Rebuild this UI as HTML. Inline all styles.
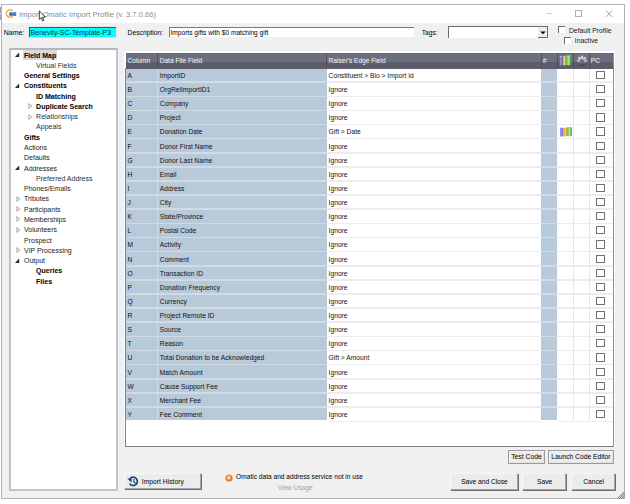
<!DOCTYPE html>
<html><head><meta charset="utf-8"><style>
*{margin:0;padding:0;box-sizing:border-box}
svg{display:block}
html,body{width:630px;height:504px;overflow:hidden;background:#fff;font-family:"Liberation Sans",sans-serif;}
.a{position:absolute;white-space:nowrap}
#win{position:absolute;left:1px;top:4px;width:624px;height:495px;border:1px solid #b4b4b4;background:#f0f0f0;overflow:hidden}
#title{position:absolute;left:0;top:0;width:622px;height:18px;background:#fff}
.t7{font-size:7px}
.g{font-size:6.7px;line-height:8px;color:#111}
.hd{font-size:6.6px;line-height:8px;color:#f6f6fa}
.btn{position:absolute;background:#ececec;border:1px solid #a6a6a6;border-top-color:#f8f8f8;border-left-color:#f8f8f8;box-shadow:1px 1px 0 #6e6e6e}
.btnt{position:absolute;left:0;right:0;text-align:center;font-size:6.6px;color:#000;-webkit-text-stroke:0.12px #000}
</style></head><body>

<div id="win">
<div id="title"></div>
</div>
<div class="a" style="left:0;top:7px;width:1px;height:12.5px;background:linear-gradient(#9aa4b4 0,#9aa4b4 45%,#e8ecf0 50%,#9aa4b4 56%,#9aa4b4 100%)"></div>
<svg class="a" style="left:4px;top:8px" width="14" height="11" viewBox="0 0 14 11">
<defs><linearGradient id="tb" x1="0" y1="0" x2="0" y2="1"><stop offset="0" stop-color="#7ab0e8"/><stop offset="1" stop-color="#1f5a9e"/></linearGradient></defs>
<path d="M8.6 2.6 A3.8 3.8 0 1 0 8.8 8.2" fill="none" stroke="#f5a040" stroke-width="1.4"/>
<path d="M5.2 4.4 Q7 3.2 8.6 4.2 Q10.4 3.2 12.2 4 Q12.6 5.6 12.2 7.4 Q10.4 8.2 8.6 7.4 Q7 8.2 5.2 7.4 Q4.8 5.8 5.2 4.4 Z" fill="url(#tb)"/>
</svg>
<div class="a" style="left:19px;top:9.8px;font-size:7.6px;color:#8c8c8c;line-height:10px">Import Omatic Import Profile (v. 3.7.0.66)</div>
<div class="a" style="left:546px;top:13.2px;width:6px;height:0.8px;background:#d4d4d4"></div>
<div class="a" style="left:575px;top:10.2px;width:6.8px;height:6.8px;border:1px solid #b0b0b0"></div>
<svg class="a" style="left:605px;top:10px" width="9" height="9" viewBox="0 0 9 9"><path d="M1 0.7 L7.2 6.9 M7.2 0.7 L1 6.9" stroke="#8c8c8c" stroke-width="0.8"/></svg>
<svg class="a" style="left:38px;top:10px" width="10" height="13" viewBox="0 0 10 13"><path d="M1.3 0.8 L1.3 9.5 L3.2 7.6 L4.6 10.9 L5.9 10.3 L4.6 7.2 L7.3 7.2 Z" fill="#fff" stroke="#111" stroke-width="0.8" stroke-linejoin="round"/></svg>
<div class="a t7" style="left:3.8px;top:29.2px;color:#000;line-height:8px">Name:</div>
<div class="a" style="left:29px;top:26.5px;width:87px;height:10.5px;background:#00ffff;border-top:1px solid #3c5a5a;border-left:1px solid #3c5a5a;box-shadow:0 0 0 0.6px #f0d8d8"></div>
<div class="a t7" style="left:30.6px;top:28.5px;color:#003838;line-height:8px">Benevity-SC-Template-P3</div>
<div class="a t7" style="left:127.6px;top:29px;color:#000;line-height:8px;font-size:6.74px">Description:</div>
<div class="a" style="left:169px;top:27px;width:245px;height:10px;background:#fff;border-top:1px solid #7a7a7a;border-left:1px solid #7a7a7a"></div>
<div class="a t7" style="left:170.5px;top:28.6px;color:#000;line-height:8px;font-size:6.6px">Imports gifts with $0 matching gift</div>
<div class="a t7" style="left:421.7px;top:29px;color:#000;line-height:8px;font-size:6.65px">Tags:</div>
<div class="a" style="left:448px;top:26.3px;width:100px;height:11.3px;background:#fff;border-top:1px solid #6e6e6e;border-left:1px solid #6e6e6e;border-right:1px solid #6a6a6a"></div>
<div class="a" style="left:537.5px;top:27.3px;width:9.6px;height:10.3px;background:#ececec;border-bottom:1px solid #6a6a6a"></div>
<svg class="a" style="left:539.5px;top:30.6px" width="6" height="4" viewBox="0 0 6 4"><path d="M0.3 0.5 L5.7 0.5 L3 3.3 Z" fill="#000"/></svg>
<div class="a" style="left:557.6px;top:26.2px;width:7.4px;height:7px;background:#fff;border-top:1px solid #6a6a6a;border-left:1px solid #6a6a6a"></div>
<div class="a" style="left:569px;top:26.6px;color:#1a1a1a;line-height:8px;font-size:6.75px">Default Profile</div>
<div class="a" style="left:564px;top:37.1px;width:7.2px;height:7px;background:#fff;border-top:1px solid #6a6a6a;border-left:1px solid #6a6a6a"></div>
<div class="a" style="left:574.8px;top:37.3px;color:#1a1a1a;line-height:8px;font-size:6.75px">Inactive</div>
<div class="a" style="left:8.8px;top:48px;width:109.2px;height:443.4px;background:#fff;border:2px solid #c2c6cc;border-left-color:#bfc3c9;border-top-color:#b4b8be"></div>
<div class="a" style="left:23px;top:50px;width:34px;height:9.6px;background:#d9d9d9"></div>
<div class="a t7" style="left:24px;top:50.50px;line-height:10px;font-weight:700;color:#000">Field Map</div>
<svg class="a" style="left:13.9px;top:52.30px" width="6" height="6" viewBox="0 0 6 6"><path d="M5.2 0.6 L5.2 4.9 L0.9 4.9 Z" fill="#2a2a2a"/></svg>
<div class="a t7" style="left:36.1px;top:60.78px;line-height:10px;font-weight:400;color:#28303a">Virtual Fields</div>
<div class="a t7" style="left:24px;top:71.06px;line-height:10px;font-weight:700;color:#000">General Settings</div>
<div class="a t7" style="left:24px;top:81.34px;line-height:10px;font-weight:700;color:#000">Constituents</div>
<svg class="a" style="left:13.9px;top:83.14px" width="6" height="6" viewBox="0 0 6 6"><path d="M5.2 0.6 L5.2 4.9 L0.9 4.9 Z" fill="#2a2a2a"/></svg>
<div class="a t7" style="left:36.1px;top:91.62px;line-height:10px;font-weight:700;color:#000">ID Matching</div>
<div class="a t7" style="left:36.1px;top:101.90px;line-height:10px;font-weight:700;color:#000">Duplicate Search</div>
<svg class="a" style="left:27.6px;top:103.40px" width="5" height="6" viewBox="0 0 5 6"><path d="M0.8 0.7 L3.9 3 L0.8 5.3 Z" fill="#fff" stroke="#909090" stroke-width="0.75"/></svg>
<div class="a t7" style="left:36.1px;top:112.18px;line-height:10px;font-weight:400;color:#28303a">Relationships</div>
<svg class="a" style="left:27.6px;top:113.68px" width="5" height="6" viewBox="0 0 5 6"><path d="M0.8 0.7 L3.9 3 L0.8 5.3 Z" fill="#fff" stroke="#909090" stroke-width="0.75"/></svg>
<div class="a t7" style="left:36.1px;top:122.46px;line-height:10px;font-weight:400;color:#28303a">Appeals</div>
<div class="a t7" style="left:24px;top:132.74px;line-height:10px;font-weight:700;color:#000">Gifts</div>
<div class="a t7" style="left:24px;top:143.02px;line-height:10px;font-weight:400;color:#1a1a1a">Actions</div>
<div class="a t7" style="left:24px;top:153.30px;line-height:10px;font-weight:400;color:#1a1a1a">Defaults</div>
<div class="a t7" style="left:24px;top:163.58px;line-height:10px;font-weight:400;color:#1a1a1a">Addresses</div>
<svg class="a" style="left:13.9px;top:165.38px" width="6" height="6" viewBox="0 0 6 6"><path d="M5.2 0.6 L5.2 4.9 L0.9 4.9 Z" fill="#2a2a2a"/></svg>
<div class="a t7" style="left:36.1px;top:173.86px;line-height:10px;font-weight:400;color:#28303a">Preferred Address</div>
<div class="a t7" style="left:24px;top:184.14px;line-height:10px;font-weight:400;color:#1a1a1a">Phones/Emails</div>
<div class="a t7" style="left:24px;top:194.42px;line-height:10px;font-weight:400;color:#1a1a1a">Tributes</div>
<svg class="a" style="left:15.5px;top:195.92px" width="5" height="6" viewBox="0 0 5 6"><path d="M0.8 0.7 L3.9 3 L0.8 5.3 Z" fill="#fff" stroke="#909090" stroke-width="0.75"/></svg>
<div class="a t7" style="left:24px;top:204.70px;line-height:10px;font-weight:400;color:#1a1a1a">Participants</div>
<svg class="a" style="left:15.5px;top:206.20px" width="5" height="6" viewBox="0 0 5 6"><path d="M0.8 0.7 L3.9 3 L0.8 5.3 Z" fill="#fff" stroke="#909090" stroke-width="0.75"/></svg>
<div class="a t7" style="left:24px;top:214.98px;line-height:10px;font-weight:400;color:#1a1a1a">Memberships</div>
<svg class="a" style="left:15.5px;top:216.48px" width="5" height="6" viewBox="0 0 5 6"><path d="M0.8 0.7 L3.9 3 L0.8 5.3 Z" fill="#fff" stroke="#909090" stroke-width="0.75"/></svg>
<div class="a t7" style="left:24px;top:225.26px;line-height:10px;font-weight:400;color:#1a1a1a">Volunteers</div>
<svg class="a" style="left:15.5px;top:226.76px" width="5" height="6" viewBox="0 0 5 6"><path d="M0.8 0.7 L3.9 3 L0.8 5.3 Z" fill="#fff" stroke="#909090" stroke-width="0.75"/></svg>
<div class="a t7" style="left:24px;top:235.54px;line-height:10px;font-weight:400;color:#1a1a1a">Prospect</div>
<div class="a t7" style="left:24px;top:245.82px;line-height:10px;font-weight:400;color:#1a1a1a">VIP Processing</div>
<svg class="a" style="left:15.5px;top:247.32px" width="5" height="6" viewBox="0 0 5 6"><path d="M0.8 0.7 L3.9 3 L0.8 5.3 Z" fill="#fff" stroke="#909090" stroke-width="0.75"/></svg>
<div class="a t7" style="left:24px;top:256.10px;line-height:10px;font-weight:400;color:#1a1a1a">Output</div>
<svg class="a" style="left:13.9px;top:257.90px" width="6" height="6" viewBox="0 0 6 6"><path d="M5.2 0.6 L5.2 4.9 L0.9 4.9 Z" fill="#2a2a2a"/></svg>
<div class="a t7" style="left:36.1px;top:266.38px;line-height:10px;font-weight:700;color:#000">Queries</div>
<div class="a t7" style="left:36.1px;top:276.66px;line-height:10px;font-weight:700;color:#000">Files</div>
<div class="a" style="left:124px;top:51px;width:490.5px;height:396px;background:#fff"></div>
<div class="a" style="left:125.2px;top:68px;width:1.2px;height:378.6px;background:#7c7c8a"></div>
<div class="a" style="left:125.2px;top:445.6px;width:488.4px;height:1.2px;background:#7c7c8a"></div>
<div class="a" style="left:612.6px;top:52.5px;width:1px;height:394.3px;background:#8e8e9a"></div>
<div class="a" style="left:125.5px;top:52.5px;width:487px;height:16px;background:linear-gradient(#5f5f6e 0,#6c6f7e 1px,#6c6f7e 8.5px,#5c5c6c 9px,#5c5c6c 15px,#646473 16px)"></div>
<div class="a" style="left:157.1px;top:52.5px;width:1px;height:16px;background:#50505e"></div>
<div class="a" style="left:326.4px;top:52.5px;width:1px;height:16px;background:#50505e"></div>
<div class="a" style="left:540.5px;top:52.5px;width:1px;height:16px;background:#50505e"></div>
<div class="a" style="left:556.5px;top:52.5px;width:1px;height:16px;background:#50505e"></div>
<div class="a" style="left:572.5px;top:52.5px;width:1px;height:16px;background:#50505e"></div>
<div class="a" style="left:588.8px;top:52.5px;width:1px;height:16px;background:#50505e"></div>
<div class="a hd" style="left:127.5px;top:57.2px">Column</div>
<div class="a hd" style="left:159.7px;top:57.2px">Data File Field</div>
<div class="a hd" style="left:328.6px;top:57.2px">Raiser's Edge Field</div>
<div class="a hd" style="left:542.7px;top:57.2px">#</div>
<div class="a hd" style="left:590.8px;top:57.2px">PC</div>
<div class="a" style="left:559px;top:55px"><svg width="14" height="12" viewBox="0 0 14 12"><defs>
<linearGradient id="bb" x1="0" x2="1"><stop offset="0" stop-color="#5a5ad8"/><stop offset=".5" stop-color="#9a9af8"/><stop offset="1" stop-color="#5858d0"/></linearGradient>
<linearGradient id="by" x1="0" x2="1"><stop offset="0" stop-color="#c89a28"/><stop offset=".5" stop-color="#f4d860"/><stop offset="1" stop-color="#c09020"/></linearGradient>
<linearGradient id="bg" x1="0" x2="1"><stop offset="0" stop-color="#60b048"/><stop offset=".5" stop-color="#a8e890"/><stop offset="1" stop-color="#48a030"/></linearGradient></defs>
<rect x="0.3" y="1.6" width="3.1" height="8.9" rx=".6" fill="url(#bb)"/>
<rect x="3.7" y="1.6" width="3.3" height="8.6" rx=".6" fill="url(#by)"/>
<rect x="7.1" y="1.0" width="4.8" height="9.2" rx=".6" fill="url(#bg)"/>
<path d="M0.8 1.4 L3 1.4 M4.2 1.3 L6.5 1.3 M7.6 0.8 L11.4 0.8" stroke="#fff" stroke-opacity=".55" stroke-width="1"/>
</svg></div>
<div class="a" style="left:575.6px;top:54.8px"><svg width="12" height="12" viewBox="-6 -6 12 12"><defs><linearGradient id="gg" x1="0" y1="0" x2="0" y2="1"><stop offset="0" stop-color="#dcdcdc"/><stop offset=".5" stop-color="#b8b8b8"/><stop offset=".7" stop-color="#6a6a6a"/><stop offset="1" stop-color="#2a2a2a"/></linearGradient></defs>
<path fill="url(#gg)" d="M-1.30 -3.46 L-1.05 -5.19 L1.05 -5.19 L1.30 -3.46 L1.53 -3.37 L2.93 -4.42 L4.42 -2.93 L3.37 -1.53 L3.46 -1.30 L5.19 -1.05 L5.19 1.05 L3.46 1.30 L3.37 1.53 L4.42 2.93 L2.93 4.42 L1.53 3.37 L1.30 3.46 L1.05 5.19 L-1.05 5.19 L-1.30 3.46 L-1.53 3.37 L-2.93 4.42 L-4.42 2.93 L-3.37 1.53 L-3.46 1.30 L-5.19 1.05 L-5.19 -1.05 L-3.46 -1.30 L-3.37 -1.53 L-4.42 -2.93 L-2.93 -4.42 L-1.53 -3.37 Z"/>
<circle r="1.6" fill="#6a6a80"/><circle r="1.8" fill="none" stroke="#555" stroke-width=".5"/></svg></div>
<div class="a" style="left:125.5px;top:68.50px;width:201.4px;height:12.90px;background:#b8c9d9"></div>
<div class="a" style="left:541px;top:68.50px;width:16px;height:12.90px;background:#b8c9d9"></div>
<div class="a" style="left:125.5px;top:81.40px;width:201.4px;height:1.6px;background:#d2dae3"></div>
<div class="a" style="left:326.9px;top:81.40px;width:214.1px;height:1.6px;background:#ececec"></div>
<div class="a" style="left:541px;top:81.40px;width:16px;height:1.6px;background:#d2dae3"></div>
<div class="a" style="left:557px;top:81.40px;width:55.5px;height:1.6px;background:#ececec"></div>
<div class="a g" style="left:127.5px;top:71.98px">A</div>
<div class="a g" style="left:159.8px;top:71.98px">ImportID</div>
<div class="a g" style="left:328.6px;top:71.98px">Constituent &gt; Bio &gt; Import Id</div>
<div class="a" style="left:596px;top:70.98px;width:8.8px;height:8.2px;background:#fff;border:1px solid #707070;border-radius:0.5px"></div>
<div class="a" style="left:125.5px;top:83.00px;width:201.4px;height:12.52px;background:#b8c9d9"></div>
<div class="a" style="left:541px;top:83.00px;width:16px;height:12.52px;background:#b8c9d9"></div>
<div class="a" style="left:125.5px;top:95.52px;width:201.4px;height:1.6px;background:#d2dae3"></div>
<div class="a" style="left:326.9px;top:95.52px;width:214.1px;height:1.6px;background:#ececec"></div>
<div class="a" style="left:541px;top:95.52px;width:16px;height:1.6px;background:#d2dae3"></div>
<div class="a" style="left:557px;top:95.52px;width:55.5px;height:1.6px;background:#ececec"></div>
<div class="a g" style="left:127.5px;top:86.10px">B</div>
<div class="a g" style="left:159.8px;top:86.10px">OrgRelImportID1</div>
<div class="a g" style="left:328.6px;top:86.10px">Ignore</div>
<div class="a" style="left:596px;top:85.10px;width:8.8px;height:8.2px;background:#fff;border:1px solid #707070;border-radius:0.5px"></div>
<div class="a" style="left:125.5px;top:97.12px;width:201.4px;height:12.52px;background:#b8c9d9"></div>
<div class="a" style="left:541px;top:97.12px;width:16px;height:12.52px;background:#b8c9d9"></div>
<div class="a" style="left:125.5px;top:109.64px;width:201.4px;height:1.6px;background:#d2dae3"></div>
<div class="a" style="left:326.9px;top:109.64px;width:214.1px;height:1.6px;background:#ececec"></div>
<div class="a" style="left:541px;top:109.64px;width:16px;height:1.6px;background:#d2dae3"></div>
<div class="a" style="left:557px;top:109.64px;width:55.5px;height:1.6px;background:#ececec"></div>
<div class="a g" style="left:127.5px;top:100.22px">C</div>
<div class="a g" style="left:159.8px;top:100.22px">Company</div>
<div class="a g" style="left:328.6px;top:100.22px">Ignore</div>
<div class="a" style="left:596px;top:99.22px;width:8.8px;height:8.2px;background:#fff;border:1px solid #707070;border-radius:0.5px"></div>
<div class="a" style="left:125.5px;top:111.24px;width:201.4px;height:12.52px;background:#b8c9d9"></div>
<div class="a" style="left:541px;top:111.24px;width:16px;height:12.52px;background:#b8c9d9"></div>
<div class="a" style="left:125.5px;top:123.76px;width:201.4px;height:1.6px;background:#d2dae3"></div>
<div class="a" style="left:326.9px;top:123.76px;width:214.1px;height:1.6px;background:#ececec"></div>
<div class="a" style="left:541px;top:123.76px;width:16px;height:1.6px;background:#d2dae3"></div>
<div class="a" style="left:557px;top:123.76px;width:55.5px;height:1.6px;background:#ececec"></div>
<div class="a g" style="left:127.5px;top:114.34px">D</div>
<div class="a g" style="left:159.8px;top:114.34px">Project</div>
<div class="a g" style="left:328.6px;top:114.34px">Ignore</div>
<div class="a" style="left:596px;top:113.34px;width:8.8px;height:8.2px;background:#fff;border:1px solid #707070;border-radius:0.5px"></div>
<div class="a" style="left:125.5px;top:125.36px;width:201.4px;height:12.52px;background:#b8c9d9"></div>
<div class="a" style="left:541px;top:125.36px;width:16px;height:12.52px;background:#b8c9d9"></div>
<div class="a" style="left:125.5px;top:137.88px;width:201.4px;height:1.6px;background:#d2dae3"></div>
<div class="a" style="left:326.9px;top:137.88px;width:214.1px;height:1.6px;background:#ececec"></div>
<div class="a" style="left:541px;top:137.88px;width:16px;height:1.6px;background:#d2dae3"></div>
<div class="a" style="left:557px;top:137.88px;width:55.5px;height:1.6px;background:#ececec"></div>
<div class="a g" style="left:127.5px;top:128.46px">E</div>
<div class="a g" style="left:159.8px;top:128.46px">Donation Date</div>
<div class="a g" style="left:328.6px;top:128.46px">Gift &gt; Date</div>
<div class="a" style="left:596px;top:127.46px;width:8.8px;height:8.2px;background:#fff;border:1px solid #707070;border-radius:0.5px"></div>
<div class="a" style="left:559.5px;top:126.46px"><svg width="14" height="12" viewBox="0 0 14 12"><defs>
<linearGradient id="bb" x1="0" x2="1"><stop offset="0" stop-color="#5a5ad8"/><stop offset=".5" stop-color="#9a9af8"/><stop offset="1" stop-color="#5858d0"/></linearGradient>
<linearGradient id="by" x1="0" x2="1"><stop offset="0" stop-color="#c89a28"/><stop offset=".5" stop-color="#f4d860"/><stop offset="1" stop-color="#c09020"/></linearGradient>
<linearGradient id="bg" x1="0" x2="1"><stop offset="0" stop-color="#60b048"/><stop offset=".5" stop-color="#a8e890"/><stop offset="1" stop-color="#48a030"/></linearGradient></defs>
<rect x="0.3" y="1.6" width="3.1" height="8.9" rx=".6" fill="url(#bb)"/>
<rect x="3.7" y="1.6" width="3.3" height="8.6" rx=".6" fill="url(#by)"/>
<rect x="7.1" y="1.0" width="4.8" height="9.2" rx=".6" fill="url(#bg)"/>
<path d="M0.8 1.4 L3 1.4 M4.2 1.3 L6.5 1.3 M7.6 0.8 L11.4 0.8" stroke="#fff" stroke-opacity=".55" stroke-width="1"/>
</svg></div>
<div class="a" style="left:125.5px;top:139.48px;width:201.4px;height:12.52px;background:#b8c9d9"></div>
<div class="a" style="left:541px;top:139.48px;width:16px;height:12.52px;background:#b8c9d9"></div>
<div class="a" style="left:125.5px;top:152.00px;width:201.4px;height:1.6px;background:#d2dae3"></div>
<div class="a" style="left:326.9px;top:152.00px;width:214.1px;height:1.6px;background:#ececec"></div>
<div class="a" style="left:541px;top:152.00px;width:16px;height:1.6px;background:#d2dae3"></div>
<div class="a" style="left:557px;top:152.00px;width:55.5px;height:1.6px;background:#ececec"></div>
<div class="a g" style="left:127.5px;top:142.58px">F</div>
<div class="a g" style="left:159.8px;top:142.58px">Donor First Name</div>
<div class="a g" style="left:328.6px;top:142.58px">Ignore</div>
<div class="a" style="left:596px;top:141.58px;width:8.8px;height:8.2px;background:#fff;border:1px solid #707070;border-radius:0.5px"></div>
<div class="a" style="left:125.5px;top:153.60px;width:201.4px;height:12.52px;background:#b8c9d9"></div>
<div class="a" style="left:541px;top:153.60px;width:16px;height:12.52px;background:#b8c9d9"></div>
<div class="a" style="left:125.5px;top:166.12px;width:201.4px;height:1.6px;background:#d2dae3"></div>
<div class="a" style="left:326.9px;top:166.12px;width:214.1px;height:1.6px;background:#ececec"></div>
<div class="a" style="left:541px;top:166.12px;width:16px;height:1.6px;background:#d2dae3"></div>
<div class="a" style="left:557px;top:166.12px;width:55.5px;height:1.6px;background:#ececec"></div>
<div class="a g" style="left:127.5px;top:156.70px">G</div>
<div class="a g" style="left:159.8px;top:156.70px">Donor Last Name</div>
<div class="a g" style="left:328.6px;top:156.70px">Ignore</div>
<div class="a" style="left:596px;top:155.70px;width:8.8px;height:8.2px;background:#fff;border:1px solid #707070;border-radius:0.5px"></div>
<div class="a" style="left:125.5px;top:167.72px;width:201.4px;height:12.52px;background:#b8c9d9"></div>
<div class="a" style="left:541px;top:167.72px;width:16px;height:12.52px;background:#b8c9d9"></div>
<div class="a" style="left:125.5px;top:180.24px;width:201.4px;height:1.6px;background:#d2dae3"></div>
<div class="a" style="left:326.9px;top:180.24px;width:214.1px;height:1.6px;background:#ececec"></div>
<div class="a" style="left:541px;top:180.24px;width:16px;height:1.6px;background:#d2dae3"></div>
<div class="a" style="left:557px;top:180.24px;width:55.5px;height:1.6px;background:#ececec"></div>
<div class="a g" style="left:127.5px;top:170.82px">H</div>
<div class="a g" style="left:159.8px;top:170.82px">Email</div>
<div class="a g" style="left:328.6px;top:170.82px">Ignore</div>
<div class="a" style="left:596px;top:169.82px;width:8.8px;height:8.2px;background:#fff;border:1px solid #707070;border-radius:0.5px"></div>
<div class="a" style="left:125.5px;top:181.84px;width:201.4px;height:12.52px;background:#b8c9d9"></div>
<div class="a" style="left:541px;top:181.84px;width:16px;height:12.52px;background:#b8c9d9"></div>
<div class="a" style="left:125.5px;top:194.36px;width:201.4px;height:1.6px;background:#d2dae3"></div>
<div class="a" style="left:326.9px;top:194.36px;width:214.1px;height:1.6px;background:#ececec"></div>
<div class="a" style="left:541px;top:194.36px;width:16px;height:1.6px;background:#d2dae3"></div>
<div class="a" style="left:557px;top:194.36px;width:55.5px;height:1.6px;background:#ececec"></div>
<div class="a g" style="left:127.5px;top:184.94px">I</div>
<div class="a g" style="left:159.8px;top:184.94px">Address</div>
<div class="a g" style="left:328.6px;top:184.94px">Ignore</div>
<div class="a" style="left:596px;top:183.94px;width:8.8px;height:8.2px;background:#fff;border:1px solid #707070;border-radius:0.5px"></div>
<div class="a" style="left:125.5px;top:195.96px;width:201.4px;height:12.52px;background:#b8c9d9"></div>
<div class="a" style="left:541px;top:195.96px;width:16px;height:12.52px;background:#b8c9d9"></div>
<div class="a" style="left:125.5px;top:208.48px;width:201.4px;height:1.6px;background:#d2dae3"></div>
<div class="a" style="left:326.9px;top:208.48px;width:214.1px;height:1.6px;background:#ececec"></div>
<div class="a" style="left:541px;top:208.48px;width:16px;height:1.6px;background:#d2dae3"></div>
<div class="a" style="left:557px;top:208.48px;width:55.5px;height:1.6px;background:#ececec"></div>
<div class="a g" style="left:127.5px;top:199.06px">J</div>
<div class="a g" style="left:159.8px;top:199.06px">City</div>
<div class="a g" style="left:328.6px;top:199.06px">Ignore</div>
<div class="a" style="left:596px;top:198.06px;width:8.8px;height:8.2px;background:#fff;border:1px solid #707070;border-radius:0.5px"></div>
<div class="a" style="left:125.5px;top:210.08px;width:201.4px;height:12.52px;background:#b8c9d9"></div>
<div class="a" style="left:541px;top:210.08px;width:16px;height:12.52px;background:#b8c9d9"></div>
<div class="a" style="left:125.5px;top:222.60px;width:201.4px;height:1.6px;background:#d2dae3"></div>
<div class="a" style="left:326.9px;top:222.60px;width:214.1px;height:1.6px;background:#ececec"></div>
<div class="a" style="left:541px;top:222.60px;width:16px;height:1.6px;background:#d2dae3"></div>
<div class="a" style="left:557px;top:222.60px;width:55.5px;height:1.6px;background:#ececec"></div>
<div class="a g" style="left:127.5px;top:213.18px">K</div>
<div class="a g" style="left:159.8px;top:213.18px">State/Province</div>
<div class="a g" style="left:328.6px;top:213.18px">Ignore</div>
<div class="a" style="left:596px;top:212.18px;width:8.8px;height:8.2px;background:#fff;border:1px solid #707070;border-radius:0.5px"></div>
<div class="a" style="left:125.5px;top:224.20px;width:201.4px;height:12.52px;background:#b8c9d9"></div>
<div class="a" style="left:541px;top:224.20px;width:16px;height:12.52px;background:#b8c9d9"></div>
<div class="a" style="left:125.5px;top:236.72px;width:201.4px;height:1.6px;background:#d2dae3"></div>
<div class="a" style="left:326.9px;top:236.72px;width:214.1px;height:1.6px;background:#ececec"></div>
<div class="a" style="left:541px;top:236.72px;width:16px;height:1.6px;background:#d2dae3"></div>
<div class="a" style="left:557px;top:236.72px;width:55.5px;height:1.6px;background:#ececec"></div>
<div class="a g" style="left:127.5px;top:227.30px">L</div>
<div class="a g" style="left:159.8px;top:227.30px">Postal Code</div>
<div class="a g" style="left:328.6px;top:227.30px">Ignore</div>
<div class="a" style="left:596px;top:226.30px;width:8.8px;height:8.2px;background:#fff;border:1px solid #707070;border-radius:0.5px"></div>
<div class="a" style="left:125.5px;top:238.32px;width:201.4px;height:12.52px;background:#b8c9d9"></div>
<div class="a" style="left:541px;top:238.32px;width:16px;height:12.52px;background:#b8c9d9"></div>
<div class="a" style="left:125.5px;top:250.84px;width:201.4px;height:1.6px;background:#d2dae3"></div>
<div class="a" style="left:326.9px;top:250.84px;width:214.1px;height:1.6px;background:#ececec"></div>
<div class="a" style="left:541px;top:250.84px;width:16px;height:1.6px;background:#d2dae3"></div>
<div class="a" style="left:557px;top:250.84px;width:55.5px;height:1.6px;background:#ececec"></div>
<div class="a g" style="left:127.5px;top:241.42px">M</div>
<div class="a g" style="left:159.8px;top:241.42px">Activity</div>
<div class="a g" style="left:328.6px;top:241.42px">Ignore</div>
<div class="a" style="left:596px;top:240.42px;width:8.8px;height:8.2px;background:#fff;border:1px solid #707070;border-radius:0.5px"></div>
<div class="a" style="left:125.5px;top:252.44px;width:201.4px;height:12.52px;background:#b8c9d9"></div>
<div class="a" style="left:541px;top:252.44px;width:16px;height:12.52px;background:#b8c9d9"></div>
<div class="a" style="left:125.5px;top:264.96px;width:201.4px;height:1.6px;background:#d2dae3"></div>
<div class="a" style="left:326.9px;top:264.96px;width:214.1px;height:1.6px;background:#ececec"></div>
<div class="a" style="left:541px;top:264.96px;width:16px;height:1.6px;background:#d2dae3"></div>
<div class="a" style="left:557px;top:264.96px;width:55.5px;height:1.6px;background:#ececec"></div>
<div class="a g" style="left:127.5px;top:255.54px">N</div>
<div class="a g" style="left:159.8px;top:255.54px">Comment</div>
<div class="a g" style="left:328.6px;top:255.54px">Ignore</div>
<div class="a" style="left:596px;top:254.54px;width:8.8px;height:8.2px;background:#fff;border:1px solid #707070;border-radius:0.5px"></div>
<div class="a" style="left:125.5px;top:266.56px;width:201.4px;height:12.52px;background:#b8c9d9"></div>
<div class="a" style="left:541px;top:266.56px;width:16px;height:12.52px;background:#b8c9d9"></div>
<div class="a" style="left:125.5px;top:279.08px;width:201.4px;height:1.6px;background:#d2dae3"></div>
<div class="a" style="left:326.9px;top:279.08px;width:214.1px;height:1.6px;background:#ececec"></div>
<div class="a" style="left:541px;top:279.08px;width:16px;height:1.6px;background:#d2dae3"></div>
<div class="a" style="left:557px;top:279.08px;width:55.5px;height:1.6px;background:#ececec"></div>
<div class="a g" style="left:127.5px;top:269.66px">O</div>
<div class="a g" style="left:159.8px;top:269.66px">Transaction ID</div>
<div class="a g" style="left:328.6px;top:269.66px">Ignore</div>
<div class="a" style="left:596px;top:268.66px;width:8.8px;height:8.2px;background:#fff;border:1px solid #707070;border-radius:0.5px"></div>
<div class="a" style="left:125.5px;top:280.68px;width:201.4px;height:12.52px;background:#b8c9d9"></div>
<div class="a" style="left:541px;top:280.68px;width:16px;height:12.52px;background:#b8c9d9"></div>
<div class="a" style="left:125.5px;top:293.20px;width:201.4px;height:1.6px;background:#d2dae3"></div>
<div class="a" style="left:326.9px;top:293.20px;width:214.1px;height:1.6px;background:#ececec"></div>
<div class="a" style="left:541px;top:293.20px;width:16px;height:1.6px;background:#d2dae3"></div>
<div class="a" style="left:557px;top:293.20px;width:55.5px;height:1.6px;background:#ececec"></div>
<div class="a g" style="left:127.5px;top:283.78px">P</div>
<div class="a g" style="left:159.8px;top:283.78px">Donation Frequency</div>
<div class="a g" style="left:328.6px;top:283.78px">Ignore</div>
<div class="a" style="left:596px;top:282.78px;width:8.8px;height:8.2px;background:#fff;border:1px solid #707070;border-radius:0.5px"></div>
<div class="a" style="left:125.5px;top:294.80px;width:201.4px;height:12.52px;background:#b8c9d9"></div>
<div class="a" style="left:541px;top:294.80px;width:16px;height:12.52px;background:#b8c9d9"></div>
<div class="a" style="left:125.5px;top:307.32px;width:201.4px;height:1.6px;background:#d2dae3"></div>
<div class="a" style="left:326.9px;top:307.32px;width:214.1px;height:1.6px;background:#ececec"></div>
<div class="a" style="left:541px;top:307.32px;width:16px;height:1.6px;background:#d2dae3"></div>
<div class="a" style="left:557px;top:307.32px;width:55.5px;height:1.6px;background:#ececec"></div>
<div class="a g" style="left:127.5px;top:297.90px">Q</div>
<div class="a g" style="left:159.8px;top:297.90px">Currency</div>
<div class="a g" style="left:328.6px;top:297.90px">Ignore</div>
<div class="a" style="left:596px;top:296.90px;width:8.8px;height:8.2px;background:#fff;border:1px solid #707070;border-radius:0.5px"></div>
<div class="a" style="left:125.5px;top:308.92px;width:201.4px;height:12.52px;background:#b8c9d9"></div>
<div class="a" style="left:541px;top:308.92px;width:16px;height:12.52px;background:#b8c9d9"></div>
<div class="a" style="left:125.5px;top:321.44px;width:201.4px;height:1.6px;background:#d2dae3"></div>
<div class="a" style="left:326.9px;top:321.44px;width:214.1px;height:1.6px;background:#ececec"></div>
<div class="a" style="left:541px;top:321.44px;width:16px;height:1.6px;background:#d2dae3"></div>
<div class="a" style="left:557px;top:321.44px;width:55.5px;height:1.6px;background:#ececec"></div>
<div class="a g" style="left:127.5px;top:312.02px">R</div>
<div class="a g" style="left:159.8px;top:312.02px">Project Remote ID</div>
<div class="a g" style="left:328.6px;top:312.02px">Ignore</div>
<div class="a" style="left:596px;top:311.02px;width:8.8px;height:8.2px;background:#fff;border:1px solid #707070;border-radius:0.5px"></div>
<div class="a" style="left:125.5px;top:323.04px;width:201.4px;height:12.52px;background:#b8c9d9"></div>
<div class="a" style="left:541px;top:323.04px;width:16px;height:12.52px;background:#b8c9d9"></div>
<div class="a" style="left:125.5px;top:335.56px;width:201.4px;height:1.6px;background:#d2dae3"></div>
<div class="a" style="left:326.9px;top:335.56px;width:214.1px;height:1.6px;background:#ececec"></div>
<div class="a" style="left:541px;top:335.56px;width:16px;height:1.6px;background:#d2dae3"></div>
<div class="a" style="left:557px;top:335.56px;width:55.5px;height:1.6px;background:#ececec"></div>
<div class="a g" style="left:127.5px;top:326.14px">S</div>
<div class="a g" style="left:159.8px;top:326.14px">Source</div>
<div class="a g" style="left:328.6px;top:326.14px">Ignore</div>
<div class="a" style="left:596px;top:325.14px;width:8.8px;height:8.2px;background:#fff;border:1px solid #707070;border-radius:0.5px"></div>
<div class="a" style="left:125.5px;top:337.16px;width:201.4px;height:12.52px;background:#b8c9d9"></div>
<div class="a" style="left:541px;top:337.16px;width:16px;height:12.52px;background:#b8c9d9"></div>
<div class="a" style="left:125.5px;top:349.68px;width:201.4px;height:1.6px;background:#d2dae3"></div>
<div class="a" style="left:326.9px;top:349.68px;width:214.1px;height:1.6px;background:#ececec"></div>
<div class="a" style="left:541px;top:349.68px;width:16px;height:1.6px;background:#d2dae3"></div>
<div class="a" style="left:557px;top:349.68px;width:55.5px;height:1.6px;background:#ececec"></div>
<div class="a g" style="left:127.5px;top:340.26px">T</div>
<div class="a g" style="left:159.8px;top:340.26px">Reason</div>
<div class="a g" style="left:328.6px;top:340.26px">Ignore</div>
<div class="a" style="left:596px;top:339.26px;width:8.8px;height:8.2px;background:#fff;border:1px solid #707070;border-radius:0.5px"></div>
<div class="a" style="left:125.5px;top:351.28px;width:201.4px;height:12.52px;background:#b8c9d9"></div>
<div class="a" style="left:541px;top:351.28px;width:16px;height:12.52px;background:#b8c9d9"></div>
<div class="a" style="left:125.5px;top:363.80px;width:201.4px;height:1.6px;background:#d2dae3"></div>
<div class="a" style="left:326.9px;top:363.80px;width:214.1px;height:1.6px;background:#ececec"></div>
<div class="a" style="left:541px;top:363.80px;width:16px;height:1.6px;background:#d2dae3"></div>
<div class="a" style="left:557px;top:363.80px;width:55.5px;height:1.6px;background:#ececec"></div>
<div class="a g" style="left:127.5px;top:354.38px">U</div>
<div class="a g" style="left:159.8px;top:354.38px">Total Donation to be Acknowledged</div>
<div class="a g" style="left:328.6px;top:354.38px">Gift &gt; Amount</div>
<div class="a" style="left:596px;top:353.38px;width:8.8px;height:8.2px;background:#fff;border:1px solid #707070;border-radius:0.5px"></div>
<div class="a" style="left:125.5px;top:365.40px;width:201.4px;height:12.52px;background:#b8c9d9"></div>
<div class="a" style="left:541px;top:365.40px;width:16px;height:12.52px;background:#b8c9d9"></div>
<div class="a" style="left:125.5px;top:377.92px;width:201.4px;height:1.6px;background:#d2dae3"></div>
<div class="a" style="left:326.9px;top:377.92px;width:214.1px;height:1.6px;background:#ececec"></div>
<div class="a" style="left:541px;top:377.92px;width:16px;height:1.6px;background:#d2dae3"></div>
<div class="a" style="left:557px;top:377.92px;width:55.5px;height:1.6px;background:#ececec"></div>
<div class="a g" style="left:127.5px;top:368.50px">V</div>
<div class="a g" style="left:159.8px;top:368.50px">Match Amount</div>
<div class="a g" style="left:328.6px;top:368.50px">Ignore</div>
<div class="a" style="left:596px;top:367.50px;width:8.8px;height:8.2px;background:#fff;border:1px solid #707070;border-radius:0.5px"></div>
<div class="a" style="left:125.5px;top:379.52px;width:201.4px;height:12.52px;background:#b8c9d9"></div>
<div class="a" style="left:541px;top:379.52px;width:16px;height:12.52px;background:#b8c9d9"></div>
<div class="a" style="left:125.5px;top:392.04px;width:201.4px;height:1.6px;background:#d2dae3"></div>
<div class="a" style="left:326.9px;top:392.04px;width:214.1px;height:1.6px;background:#ececec"></div>
<div class="a" style="left:541px;top:392.04px;width:16px;height:1.6px;background:#d2dae3"></div>
<div class="a" style="left:557px;top:392.04px;width:55.5px;height:1.6px;background:#ececec"></div>
<div class="a g" style="left:127.5px;top:382.62px">W</div>
<div class="a g" style="left:159.8px;top:382.62px">Cause Support Fee</div>
<div class="a g" style="left:328.6px;top:382.62px">Ignore</div>
<div class="a" style="left:596px;top:381.62px;width:8.8px;height:8.2px;background:#fff;border:1px solid #707070;border-radius:0.5px"></div>
<div class="a" style="left:125.5px;top:393.64px;width:201.4px;height:12.52px;background:#b8c9d9"></div>
<div class="a" style="left:541px;top:393.64px;width:16px;height:12.52px;background:#b8c9d9"></div>
<div class="a" style="left:125.5px;top:406.16px;width:201.4px;height:1.6px;background:#d2dae3"></div>
<div class="a" style="left:326.9px;top:406.16px;width:214.1px;height:1.6px;background:#ececec"></div>
<div class="a" style="left:541px;top:406.16px;width:16px;height:1.6px;background:#d2dae3"></div>
<div class="a" style="left:557px;top:406.16px;width:55.5px;height:1.6px;background:#ececec"></div>
<div class="a g" style="left:127.5px;top:396.74px">X</div>
<div class="a g" style="left:159.8px;top:396.74px">Merchant Fee</div>
<div class="a g" style="left:328.6px;top:396.74px">Ignore</div>
<div class="a" style="left:596px;top:395.74px;width:8.8px;height:8.2px;background:#fff;border:1px solid #707070;border-radius:0.5px"></div>
<div class="a" style="left:125.5px;top:407.76px;width:201.4px;height:12.52px;background:#b8c9d9"></div>
<div class="a" style="left:541px;top:407.76px;width:16px;height:12.52px;background:#b8c9d9"></div>
<div class="a" style="left:326.9px;top:420.68px;width:214.1px;height:1.2px;background:#ececec"></div>
<div class="a" style="left:557px;top:420.68px;width:55.5px;height:1.2px;background:#ececec"></div>
<div class="a g" style="left:127.5px;top:410.86px">Y</div>
<div class="a g" style="left:159.8px;top:410.86px">Fee Comment</div>
<div class="a g" style="left:328.6px;top:410.86px">Ignore</div>
<div class="a" style="left:596px;top:409.86px;width:8.8px;height:8.2px;background:#fff;border:1px solid #707070;border-radius:0.5px"></div>
<div class="a" style="left:157.1px;top:68.5px;width:1.2px;height:351.8px;background:#d2dae3"></div>
<div class="a" style="left:572.5px;top:68.5px;width:1px;height:351.8px;background:#e6e6e6"></div>
<div class="a" style="left:588.8px;top:68.5px;width:1px;height:351.8px;background:#e6e6e6"></div>
<div class="a" style="left:507.8px;top:450.2px;width:37.4px;height:13.7px;background:#ececec;border:1px solid #9a9a9a;box-shadow:inset 1px 1px 0 #f6f6f6, inset -1px -1px 0 #e2e2e2"></div>
<div class="a" style="left:507.8px;top:450.60px;width:37.4px;height:13.7px;display:flex;align-items:center;justify-content:center;font-size:6.8px;line-height:8px;color:#000">Test Code</div>
<div class="a" style="left:548.1px;top:450.2px;width:65.6px;height:13.7px;background:#ececec;border:1px solid #9a9a9a;box-shadow:inset 1px 1px 0 #f6f6f6, inset -1px -1px 0 #e2e2e2"></div>
<div class="a" style="left:548.1px;top:450.60px;width:65.6px;height:13.7px;display:flex;align-items:center;justify-content:center;font-size:6.72px;line-height:8px;color:#000">Launch Code Editor</div>
<div class="btn" style="left:450.4px;top:473.3px;width:67.2px;height:16.4px"></div>
<div class="a" style="left:450.4px;top:473.50px;width:68.2px;height:17.4px;display:flex;align-items:center;justify-content:center;font-size:6.6px;line-height:8px;color:#000">Save and Close</div>
<div class="btn" style="left:522px;top:473px;width:44.4px;height:16.7px"></div>
<div class="a" style="left:522px;top:473.20px;width:45.4px;height:17.7px;display:flex;align-items:center;justify-content:center;font-size:6.7px;line-height:8px;color:#000">Save</div>
<div class="btn" style="left:570.9px;top:473px;width:44.4px;height:16.7px"></div>
<div class="a" style="left:570.9px;top:473.20px;width:45.4px;height:17.7px;display:flex;align-items:center;justify-content:center;font-size:6.68px;line-height:8px;color:#000">Cancel</div>
<div class="btn" style="left:124.4px;top:472.9px;width:77px;height:16.6px"></div>
<svg class="a" style="left:126.5px;top:476px" width="12" height="11" viewBox="0 0 12 11"><path d="M3 2.6 A4.2 4.2 0 1 1 2.6 7.6" fill="none" stroke="#1a3e78" stroke-width="1.7"/><path d="M0.2 2.4 L4.6 2.4 L4.6 6.4 Z" fill="#1a3e78"/><path d="M6.9 3 L6.9 5.9 L8.6 7.2" fill="none" stroke="#1a3e78" stroke-width="1.1"/></svg>
<div class="a t7" style="left:141.8px;top:477.6px;line-height:8px;color:#000;font-size:6.75px">Import History</div>
<svg class="a" style="left:225px;top:473.6px" width="8" height="8" viewBox="0 0 8 8"><defs><radialGradient id="og" cx=".45" cy=".4" r=".6"><stop offset="0" stop-color="#ffc890"/><stop offset=".5" stop-color="#f59040"/><stop offset="1" stop-color="#e06a10"/></radialGradient></defs><circle cx="4" cy="4" r="3.6" fill="url(#og)"/><path d="M2.8 2.8 L5.2 5.2 M5.2 2.8 L2.8 5.2" stroke="#fff" stroke-width="0.9" stroke-opacity=".9"/></svg>
<div class="a t7" style="left:236.1px;top:473.4px;line-height:8px;color:#000;font-size:6.6px">Omatic data and address service not in use</div>
<div class="a t7" style="left:277.7px;top:484.2px;line-height:8px;color:#a4a4a4;font-size:6.6px">View Usage</div>
<svg class="a" style="left:617px;top:491px" width="8" height="8" viewBox="0 0 8 8"><path d="M7.5 0.5 L7.5 7.5 L0.5 7.5 Z" fill="#d0d0d0"/><g fill="#8a8a8a"><rect x="7" y="0" width="1" height="1"/><rect x="6" y="1" width="1" height="1"/><rect x="5" y="2" width="1" height="1"/><rect x="7" y="2" width="1" height="1"/><rect x="4" y="3" width="1" height="1"/><rect x="6" y="3" width="1" height="1"/><rect x="3" y="4" width="1" height="1"/><rect x="5" y="4" width="1" height="1"/><rect x="7" y="4" width="1" height="1"/><rect x="2" y="5" width="1" height="1"/><rect x="4" y="5" width="1" height="1"/><rect x="6" y="5" width="1" height="1"/><rect x="1" y="6" width="1" height="1"/><rect x="3" y="6" width="1" height="1"/><rect x="5" y="6" width="1" height="1"/><rect x="7" y="6" width="1" height="1"/><rect x="0" y="7" width="1" height="1"/><rect x="2" y="7" width="1" height="1"/><rect x="4" y="7" width="1" height="1"/><rect x="6" y="7" width="1" height="1"/></g></svg>
</body></html>
